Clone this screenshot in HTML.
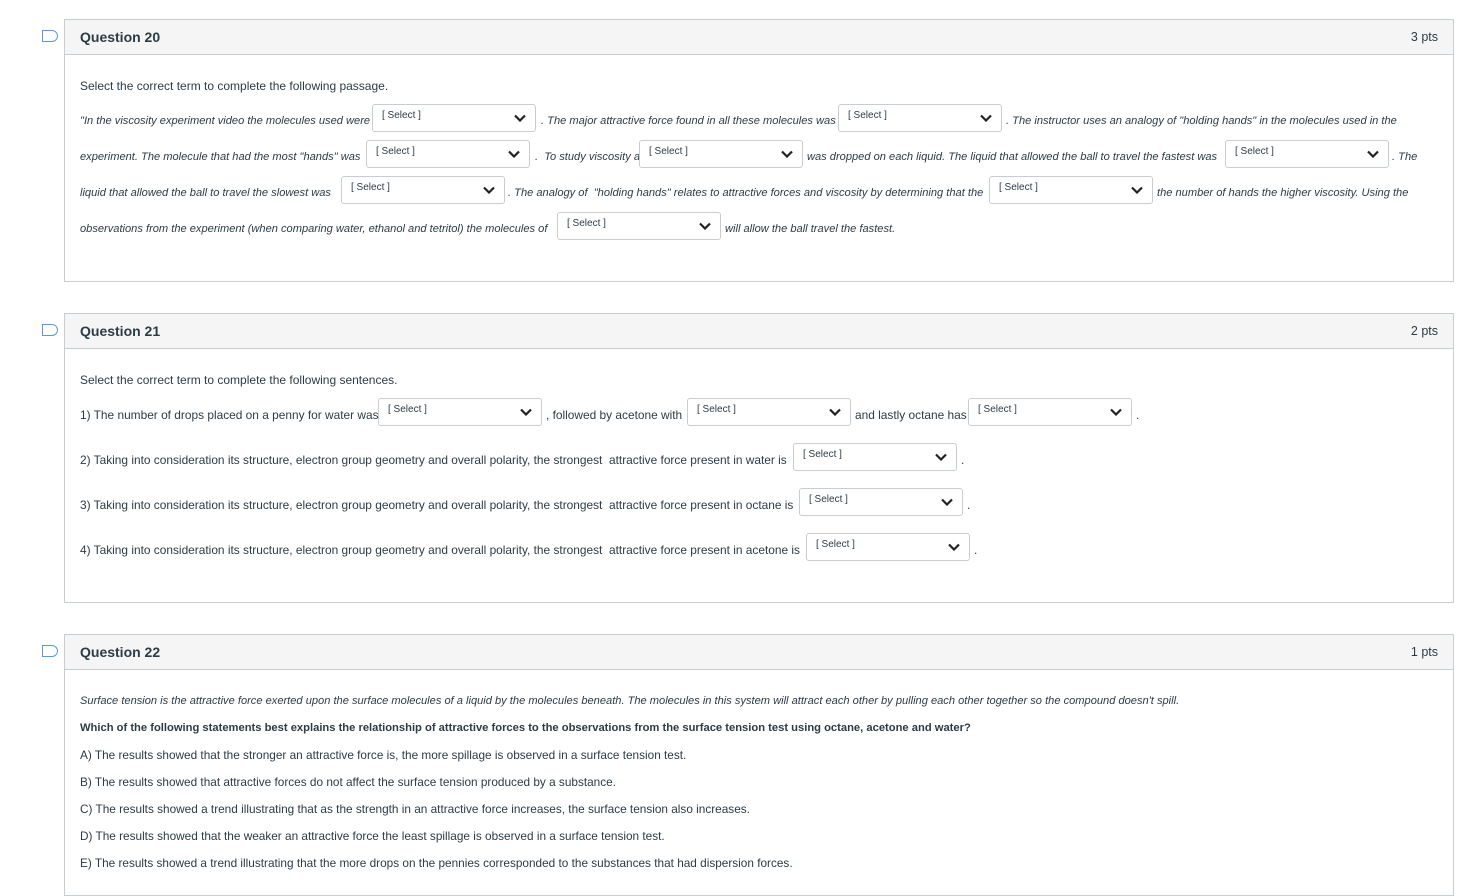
<!DOCTYPE html>
<html><head><style>
body{margin:0;width:1472px;height:887px;overflow:hidden;background:#fff;font-family:"Liberation Sans",sans-serif;color:#2d3b45;position:relative}
.card{position:absolute;left:64px;width:1388px;border:1px solid #c7cdd1;background:#fff}
.hd{height:34px;background:#f5f5f5;border-bottom:1px solid #c7cdd1;position:relative}
.hd b{position:absolute;left:15px;top:9px;font-size:14px;color:#2d3b45}
.hd span{position:absolute;right:15px;top:10px;font-size:12.5px;color:#2d3b45}
.flag{position:absolute;left:42px;width:14px;height:10px;border:1.5px solid #5a9bd5;border-radius:0 6px 6px 0}
.t{position:absolute;font-size:11.9px;white-space:nowrap;line-height:14px}
.i{font-style:italic;font-size:11.1px}
.s{position:absolute;width:162px;height:26px;border:1px solid #c7cdd1;border-radius:3px;background:#fff}
.s span{position:absolute;left:9px;top:5px;font-size:10px;color:#2d3b45}
.s svg{position:absolute;right:9px;top:9px}
.q{font-size:11.8px}
</style></head><body>
<div class="flag" style="top:30px"></div>
<div class="flag" style="top:324px"></div>
<div class="flag" style="top:645px"></div>
<div class="card" style="top:19px;height:261px"><div class="hd"><b>Question 20</b><span>3 pts</span></div></div>
<div class="card" style="top:313px;height:288px"><div class="hd"><b>Question 21</b><span>2 pts</span></div></div>
<div class="card" style="top:634px;height:260px"><div class="hd"><b>Question 22</b><span>1 pts</span></div></div>

<div class="t" style="left:80px;top:79px;font-size:12px">Select the correct term to complete the following passage.</div>
<div class="t i" style="left:80px;top:114px">"In the viscosity experiment video the molecules used were</div>
<div class="t i" style="left:541px;top:114px">. The major attractive force found in all these molecules was</div>
<div class="t i" style="left:1006px;top:114px">. The instructor uses an analogy of "holding hands" in the molecules used in the</div>
<div class="t i" style="left:80px;top:150px">experiment. The molecule that had the most "hands" was</div>
<div class="t i" style="left:535px;top:150px">.&nbsp; To study viscosity a</div>
<div class="t i" style="left:807px;top:150px">was dropped on each liquid. The liquid that allowed the ball to travel the fastest was</div>
<div class="t i" style="left:1392px;top:150px">. The</div>
<div class="t i" style="left:80px;top:186px">liquid that allowed the ball to travel the slowest was</div>
<div class="t i" style="left:508px;top:186px">. The analogy of&nbsp; "holding hands" relates to attractive forces and viscosity by determining that the</div>
<div class="t i" style="left:1157px;top:186px">the number of hands the higher viscosity. Using the</div>
<div class="t i" style="left:80px;top:222px">observations from the experiment (when comparing water, ethanol and tetritol) the molecules of</div>
<div class="t i" style="left:725px;top:222px">will allow the ball travel the fastest.</div>

<div class="t" style="left:80px;top:373px;font-size:12px">Select the correct term to complete the following sentences.</div>
<div class="t" style="left:80px;top:408px">1) The number of drops placed on a penny for water was</div>
<div class="t" style="left:546px;top:408px">, followed by acetone with</div>
<div class="t" style="left:855px;top:408px">and lastly octane has</div>
<div class="t" style="left:1136px;top:408px">.</div>
<div class="t" style="left:80px;top:453px">2) Taking into consideration its structure, electron group geometry and overall polarity, the strongest&nbsp; attractive force present in water is</div>
<div class="t" style="left:961px;top:453px">.</div>
<div class="t" style="left:80px;top:498px">3) Taking into consideration its structure, electron group geometry and overall polarity, the strongest&nbsp; attractive force present in octane is</div>
<div class="t" style="left:967px;top:498px">.</div>
<div class="t" style="left:80px;top:543px">4) Taking into consideration its structure, electron group geometry and overall polarity, the strongest&nbsp; attractive force present in acetone is</div>
<div class="t" style="left:974px;top:543px">.</div>

<div class="t i" style="left:80px;top:694px;font-size:11.1px">Surface tension is the attractive force exerted upon the surface molecules of a liquid by the molecules beneath. The molecules in this system will attract each other by pulling each other together so the compound doesn't spill.</div>
<div class="t" style="left:80px;top:721px;font-weight:bold;font-size:11.2px">Which of the following statements best explains the relationship of attractive forces to the observations from the surface tension test using octane, acetone and water?</div>
<div class="t q" style="left:80px;top:748px">A) The results showed that the stronger an attractive force is, the more spillage is observed in a surface tension test.</div>
<div class="t q" style="left:80px;top:775px">B) The results showed that attractive forces do not affect the surface tension produced by a substance.</div>
<div class="t q" style="left:80px;top:802px">C) The results showed a trend illustrating that as the strength in an attractive force increases, the surface tension also increases.</div>
<div class="t q" style="left:80px;top:829px">D) The results showed that the weaker an attractive force the least spillage is observed in a surface tension test.</div>
<div class="t q" style="left:80px;top:856px">E) The results showed a trend illustrating that the more drops on the pennies corresponded to the substances that had dispersion forces.</div>

<div id="sel"></div>
<script>
var p=[[372,104],[838,104],[366,140],[639,140],[1225,140],[341,176],[989,176],[557,212],[378,398],[687,398],[968,398],[793,443],[799,488],[806,533]];
var h='';p.forEach(function(a){h+='<div class="s" style="left:'+a[0]+'px;top:'+a[1]+'px"><span>[ Select ]</span><svg width="12" height="8" viewBox="0 0 12 8"><path d="M1 1.5L6 6.5L11 1.5" fill="none" stroke="#222" stroke-width="2.2"/></svg></div>';});
document.getElementById('sel').innerHTML=h;
</script>
</body></html>
